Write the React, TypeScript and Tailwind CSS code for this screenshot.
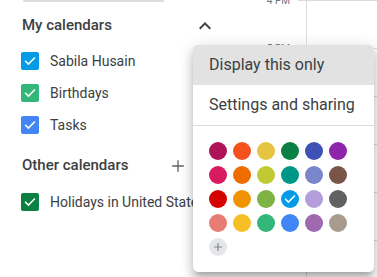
import React from "react";

type Cal = { name: string; color: string };

const myCalendars: Cal[] = [
  { name: "Sabila Husain", color: "#039be5" },
  { name: "Birthdays", color: "#33b679" },
  { name: "Tasks", color: "#4285f4" },
];

const otherCalendars: Cal[] = [{ name: "Holidays in United States", color: "#0b8043" }];

const palette = [
  ["#ad1457", "#f4511e", "#e4c441", "#0b8043", "#3f51b5", "#8e24aa"],
  ["#d81b60", "#ef6c00", "#c0ca33", "#009688", "#7986cb", "#795548"],
  ["#d50000", "#f09300", "#7cb342", "#039be5", "#b39ddb", "#616161"],
  ["#e67c73", "#f6bf26", "#33b679", "#4285f4", "#9e69af", "#a79b8e"],
];

const Check = ({ size = 14 }: { size?: number }) => (
  <svg width={size} height={size} viewBox="0 0 24 24" fill="none">
    <path d="M4.5 12.5l4.8 4.8L19.5 7" stroke="white" strokeWidth="2.6" strokeLinecap="square" />
  </svg>
);

const CalendarRow = ({ cal }: { cal: Cal }) => (
  <div className="flex items-center h-8 whitespace-nowrap">
    <div
      className="w-[18px] h-[18px] rounded-[2px] flex items-center justify-center shrink-0"
      style={{ backgroundColor: cal.color }}
    >
      <Check />
    </div>
    <span className="ml-[11px] text-[14px] text-[#3c4043]">{cal.name}</span>
  </div>
);

const App: React.FC = () => {
  return (
    <div className="relative w-[377px] h-[277px] overflow-hidden bg-white font-['Roboto',sans-serif]">
      <div className="flex h-full">
        {/* sidebar */}
        <div className="w-[256px] shrink-0 pl-[21px]">
          <div className="ml-[2px] w-[141px] h-[2px] rounded-full bg-[#dadce0]" />
          <div className="flex items-center justify-between h-[43px] pt-[4px] pr-[39px]">
            <span className="ml-[1px] text-[15px] font-medium text-[#3c4043]">My calendars</span>
            <svg width="24" height="24" viewBox="0 0 24 24" fill="#3c4043">
              <path d="M7.41 15.41L12 10.83l4.59 4.58L18 14l-6-6-6 6z" />
            </svg>
          </div>
          {myCalendars.map((c) => (
            <CalendarRow key={c.name} cal={c} />
          ))}
          <div className="flex items-center justify-between h-[45px] pt-[4px] pr-[68px]">
            <span className="ml-[1px] text-[15px] font-medium text-[#3c4043]">Other calendars</span>
            <svg width="20" height="20" viewBox="0 0 24 24" fill="#5f6368">
              <path d="M19 12.8h-6.2V19h-1.6v-6.2H5v-1.6h6.2V5h1.6v6.2H19z" />
            </svg>
          </div>
          {otherCalendars.map((c) => (
            <CalendarRow key={c.name} cal={c} />
          ))}
        </div>

        {/* time gutter */}
        <div className="w-[50px] shrink-0 flex flex-col">
          {["4 PM", "5 PM", "6 PM", "7 PM", "8 PM", "9 PM"].map((t) => (
            <div key={t} className="h-[48px] shrink-0 relative">
              <span className="absolute right-[16px] top-[-7px] text-[10px] text-[#70757a]">{t}</span>
              <div className="absolute right-0 top-0 w-[8px] h-px bg-[#dadce0]" />
            </div>
          ))}
        </div>

        {/* grid */}
        <div className="flex-1 border-l border-[#dadce0] flex flex-col">
          {[0, 1, 2, 3, 4, 5].map((i) => (
            <div key={i} className="h-[48px] shrink-0 border-t border-[#dadce0]" />
          ))}
        </div>
      </div>

      {/* context menu */}
      <div className="absolute left-[193px] top-[45px] w-[181px] bg-white rounded-[5px] shadow-[0_8px_10px_1px_rgba(0,0,0,0.14),0_3px_14px_2px_rgba(0,0,0,0.12),0_5px_5px_-3px_rgba(0,0,0,0.2)] overflow-hidden">
        <div className="h-[40px] flex items-center pl-[16px] bg-[#e2e2e2] text-[16px] text-[#3c4043]">
          Display this only
        </div>
        <div className="h-[40px] flex items-center pl-[16px] text-[16px] text-[#3c4043]">
          Settings and sharing
        </div>
        <div className="h-px bg-[#dadce0]" />
        <div className="pt-[16px] pb-[16px] pl-[16px] grid grid-cols-[repeat(6,18px)] gap-[6px]">
          {palette.flat().map((c) => (
            <div
              key={c}
              className="w-[18px] h-[18px] rounded-full flex items-center justify-center"
              style={{ backgroundColor: c }}
            >
              {c === "#039be5" && <Check size={14} />}
            </div>
          ))}
          <div className="w-[18px] h-[18px] rounded-full bg-[#e4e6e9] flex items-center justify-center">
            <svg width="14" height="14" viewBox="0 0 24 24" fill="#80868b">
              <path d="M19 13h-6v6h-2v-6H5v-2h6V5h2v6h6v2z" />
            </svg>
          </div>
        </div>
      </div>
    </div>
  );
};

export default App;
